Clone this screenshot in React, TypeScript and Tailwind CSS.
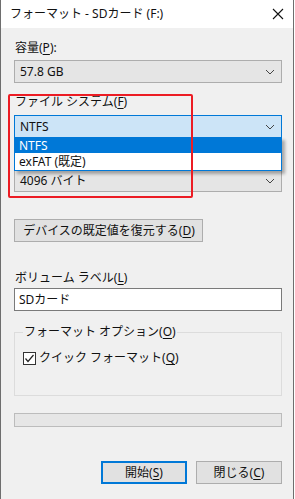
import React from "react";

const Chevron = () => (
  <svg width="10" height="6" viewBox="0 0 10 6" className="shrink-0">
    <path d="M1 1 L5 5 L9 1" fill="none" stroke="#444" strokeWidth="1" />
  </svg>
);

const U = ({ children }: { children: React.ReactNode }) => <span className="underline underline-offset-2">{children}</span>;

const Select = ({ value, className }: { value: string; className?: string }) => (
  <div className={`flex h-[23px] w-[268px] items-center justify-between pl-[5px] pr-[6px] ${className}`}>
    <span>{value}</span>
    <Chevron />
  </div>
);

export default function App() {
  return (
    <div className="relative h-[499px] w-[295px] bg-white font-['Noto_Sans','Noto_Sans_CJK_JP',sans-serif] text-[12px] leading-[16px] text-[#111]">
      <div className="flex h-full w-[294px] flex-col border-x border-[#6e6e6e] bg-[#f0f0f0]">
        {/* title bar */}
        <div className="flex h-[28px] shrink-0 items-center justify-between bg-white pl-[9px] pr-[9px]">
          <span>フォーマット - SDカード (F:)</span>
          <svg width="12" height="12" viewBox="0 0 12 12">
            <path d="M1 1 L11 11 M11 1 L1 11" stroke="#111" strokeWidth="1.1" />
          </svg>
        </div>

        <div className="flex flex-col pl-[13px]">
          <div className="mt-[12px] pl-[1px]">容量(<U>P</U>):</div>
          <Select value="57.8 GB" className="mt-[4px] border border-[#adadad] bg-[#e5e5e5]" />

          <div className="mt-[11px] pl-[1px]">ファイル システム(<U>F</U>)</div>
          <Select value="NTFS" className="mt-[5px] border border-[#0078d7] bg-[#cce4f7]" />

          {/* allocation-size label sits under the open list */}
          <div className="mt-[11px] h-[16px]" />
          <Select value="4096 バイト" className="mt-[4px] border border-[#adadad] bg-[#e5e5e5]" />

          <button className="mt-[27px] h-[23px] w-[189px] border border-[#adadad] bg-[#e1e1e1] pl-[1px]">
            デバイスの既定値を復元する(<U>D</U>)
          </button>

          <div className="mt-[28px] pl-[1px]">ボリューム ラベル(<U>L</U>)</div>
          <div className="mt-[2px] flex h-[23px] w-[268px] items-center border border-[#7a7a7a] bg-white pl-[4px]">
            SDカード
          </div>

          <fieldset className="mt-[13px] h-[72px] w-[268px] border border-[#dcdcdc] px-[8px] pt-[10px]">
            <legend className="px-[1px]">フォーマット オプション(<U>O</U>)</legend>
            <label className="flex items-center gap-[3px]">
              <span className="flex h-[13px] w-[13px] items-center justify-center border border-[#333] bg-white">
                <svg width="11" height="11" viewBox="0 0 11 11">
                  <path d="M1.5 5.5 L4 8.5 L9.5 2" fill="none" stroke="#222" strokeWidth="1.2" />
                </svg>
              </span>
              <span>クイック フォーマット(<U>Q</U>)</span>
            </label>
          </fieldset>

          <div className="mt-[17px] h-[14px] w-[268px] border border-[#bcbcbc] bg-[#e6e6e6]" />

          <div className="mt-[34px] flex w-[268px] justify-end gap-[9px]">
            <button className="h-[23px] w-[86px] border-2 border-[#0078d7] bg-[#e1e1e1]">
              開始(<U>S</U>)
            </button>
            <button className="h-[23px] w-[86px] border border-[#adadad] bg-[#e1e1e1]">
              閉じる(<U>C</U>)
            </button>
          </div>
        </div>
      </div>

      {/* open dropdown list */}
      <div className="absolute left-[14px] top-[137px] w-[268px] border border-[#0078d7] bg-white shadow-[3px_3px_3px_rgba(0,0,0,0.3)]">
        <div className="h-[15px] bg-[#0078d7] pl-[4px] leading-[15px] text-white">NTFS</div>
        <div className="h-[17px] pl-[4px] leading-[17px]">exFAT (既定)</div>
      </div>

      {/* red highlight */}
      <div className="pointer-events-none absolute left-[8px] top-[94px] h-[104px] w-[185px] rounded-[2px] border-2 border-[#ec1c24]" />
    </div>
  );
}
